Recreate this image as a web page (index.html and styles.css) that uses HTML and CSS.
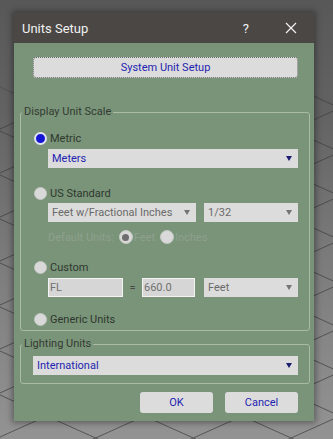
FILE: index.html
```html
<!DOCTYPE html>
<html>
<head>
  <link rel="stylesheet" href="styles.css">
</head>
<body>
  <svg class="grid" width="333" height="439" viewBox="0 0 333 439">
    <g stroke="#3e3e3e" stroke-width="1" fill="none" opacity="0.7">
      <line x1="-200" y1="349" x2="400" y2="619"/>
      <line x1="-200" y1="305" x2="400" y2="575"/>
      <line x1="-200" y1="261" x2="400" y2="531"/>
      <line x1="-200" y1="217" x2="400" y2="487"/>
      <line x1="-200" y1="173" x2="400" y2="443"/>
      <line x1="-200" y1="129" x2="400" y2="399"/>
      <line x1="-200" y1="85" x2="400" y2="355"/>
      <line x1="-200" y1="41" x2="400" y2="311"/>
      <line x1="-200" y1="-3" x2="400" y2="267"/>
      <line x1="-200" y1="-47" x2="400" y2="223"/>
      <line x1="-200" y1="-91" x2="400" y2="179"/>
      <line x1="-200" y1="-135" x2="400" y2="135"/>
      <line x1="-200" y1="-179" x2="400" y2="91"/>
      <line x1="-200" y1="-223" x2="400" y2="47"/>
      <line x1="-200" y1="615" x2="400" y2="345"/>
      <line x1="-200" y1="571" x2="400" y2="301"/>
      <line x1="-200" y1="527" x2="400" y2="257"/>
      <line x1="-200" y1="483" x2="400" y2="213"/>
      <line x1="-200" y1="439" x2="400" y2="169"/>
      <line x1="-200" y1="395" x2="400" y2="125"/>
      <line x1="-200" y1="351" x2="400" y2="81"/>
      <line x1="-200" y1="307" x2="400" y2="37"/>
      <line x1="-200" y1="263" x2="400" y2="-7"/>
      <line x1="-200" y1="219" x2="400" y2="-51"/>
      <line x1="-200" y1="659" x2="400" y2="389"/>
      <line x1="-200" y1="703" x2="400" y2="433"/>
      <line x1="-200" y1="747" x2="400" y2="477"/>
    </g>
    <rect x="0" y="0" width="333" height="96" fill="url(#fade)"/>
    <defs>
      <linearGradient id="fade" x1="0" y1="0" x2="0" y2="1">
        <stop offset="0" stop-color="#585858"/>
        <stop offset="0.8" stop-color="#5f5f5f"/>
        <stop offset="1" stop-color="#626262" stop-opacity="0"/>
      </linearGradient>
    </defs>
  </svg>

  <div class="dialog">
    <div class="titlebar">
      <span class="title">Units Setup</span>
      <span class="help">?</span>
      <svg class="close" width="12" height="12" viewBox="0 0 12 12">
        <path d="M1 1 L11 11 M11 1 L1 11" stroke="#f2f2f2" stroke-width="1.2" fill="none"/>
      </svg>
    </div>

    <div class="content">
      <button class="sys-btn" type="button">System Unit Setup</button>

      <fieldset class="group scale">
        <legend>Display Unit Scale</legend>

        <label class="opt"><span class="radio on"></span>Metric</label>
        <div class="select indent"><span>Meters</span><i class="arrow"></i></div>

        <label class="opt us"><span class="radio"></span>US Standard</label>
        <div class="row indent">
          <div class="select off fract"><span>Feet w/Fractional Inches</span><i class="arrow"></i></div>
          <div class="select off frac32"><span>1/32</span><i class="arrow"></i></div>
        </div>
        <div class="row indent defaults">
          <span class="faint">Default Units:</span>
          <span class="radio small dot"></span><span class="faint">Feet</span>
          <span class="radio small"></span><span class="faint">Inches</span>
        </div>

        <label class="opt custom"><span class="radio"></span>Custom</label>
        <div class="row indent">
          <input class="field fl" type="text" value="FL">
          <span class="eq">=</span>
          <input class="field num" type="text" value="660.0">
          <div class="select off feet"><span>Feet</span><i class="arrow"></i></div>
        </div>

        <label class="opt generic"><span class="radio"></span>Generic Units</label>
      </fieldset>

      <fieldset class="group lighting">
        <legend>Lighting Units</legend>
        <div class="select"><span>International</span><i class="arrow"></i></div>
      </fieldset>

      <div class="actions">
        <button class="btn" type="button">OK</button>
        <button class="btn" type="button">Cancel</button>
      </div>
    </div>
  </div>
</body>
</html>
```

FILE: styles.css
```css
body {
  margin: 0;
  width: 333px;
  height: 439px;
  overflow: hidden;
  position: relative;
  font-family: Roboto, "Liberation Sans", sans-serif;
  font-size: 11px;
  background: linear-gradient(#585858 0%, #626262 25%, #7c7c7c 60%, #939393 100%);
}

.grid {
  position: absolute;
  left: 0;
  top: 0;
}

.dialog {
  position: relative;
  margin: 13px 0 0 14px;
  width: 300px;
  box-shadow: 0 0 6px 2px rgba(0, 0, 0, 0.35);
}

.titlebar {
  height: 30px;
  background: #4a4744;
  display: flex;
  align-items: center;
  padding-left: 8px;
  color: #f2f2f2;
}
.title {
  font-size: 13px;
  flex: 1;
}
.help {
  font-size: 13px;
  margin-right: 36px;
}
.close {
  margin-right: 17px;
}

.content {
  background: #7a9479;
  padding: 14px 4px 8px 6px;
}

.sys-btn {
  display: block;
  margin: 0 12px 0 13px;
  width: 265px;
  height: 21px;
  background: #dcdcdc;
  border: 1px dotted #6a6a6a;
  border-radius: 3px;
  color: #2424b0;
  font-family: inherit;
  font-size: 11px;
  padding: 0;
}

.group {
  margin: 0;
  border: 1px solid #a9bba7;
  border-radius: 3px;
  color: #2e372d;
}
.group legend {
  padding: 0 2px;
  line-height: 14px;
  color: #333b32;
}

.scale {
  margin-top: 27px;
  padding: 11px 11px 3px 13px;
}
.scale legend {
  margin-left: -12px;
}

.opt {
  display: flex;
  align-items: center;
  height: 16px;
  gap: 3px;
}
.us { margin-top: 17px; }
.custom { margin-top: 14px; }
.generic { margin-top: 14px; }

.radio {
  width: 13px;
  height: 13px;
  border-radius: 50%;
  background: #d9d9d9;
  box-sizing: border-box;
  border: 1px solid #c4c9c3;
  display: flex;
  align-items: center;
  justify-content: center;
}
.radio.on {
  background: #1414d4;
  border: 2px solid #dfe2f0;
}
.radio.small {
  width: 14px;
  height: 14px;
  margin-left: 4px;
}
.radio.dot::after {
  content: "";
  width: 7px;
  height: 7px;
  border-radius: 50%;
  background: #6d6d6d;
}

.indent {
  margin-left: 14px;
}

.row {
  display: flex;
  align-items: center;
}

.select {
  height: 19px;
  background: #dcdcdc;
  display: flex;
  align-items: center;
  padding: 0 6px 0 4px;
  color: #2424b0;
  font-size: 11px;
}
.select span {
  flex: 1;
}
.select .arrow {
  width: 0;
  height: 0;
  border-left: 3px solid transparent;
  border-right: 3px solid transparent;
  border-top: 5px solid #1c1c70;
}
.scale > .select {
  margin-top: 3px;
}

.select.off {
  color: #6a6a6a;
}
.select.off .arrow {
  border-top-color: #747474;
}
.row > .select {
  margin-top: 2px;
}
.fract {
  width: 138px;
  margin-right: 8px;
}
.frac32 {
  flex: 1;
}

.defaults {
  margin-top: 7px;
  height: 16px;
  gap: 1px;
}
.faint {
  color: #8fa08e;
}

.field {
  height: 19px;
  box-sizing: border-box;
  border: 1px solid #f4f4f4;
  background: #d6d6d6;
  color: #707070;
  font-family: inherit;
  font-size: 11px;
  padding: 0 1px;
  margin-top: 3px;
}
.fl { width: 75px; }
.num { width: 53px; }
.eq {
  width: 19px;
  text-align: center;
  color: #4a4a4a;
  margin-top: 3px;
}
.feet {
  flex: 1;
  margin-left: 9px;
  margin-top: 3px !important;
}

.lighting {
  margin-top: 6px;
  padding: 5px 11px 8px 12px;
}
.lighting legend {
  margin-left: -11px;
}

.actions {
  display: flex;
  justify-content: flex-end;
  gap: 12px;
  margin-top: 8px;
  padding-right: 12px;
}
.btn {
  width: 73px;
  height: 21px;
  background: #dcdcdc;
  border: none;
  border-radius: 3px;
  color: #2424b0;
  font-family: inherit;
  font-size: 11px;
  padding: 0;
}
```
